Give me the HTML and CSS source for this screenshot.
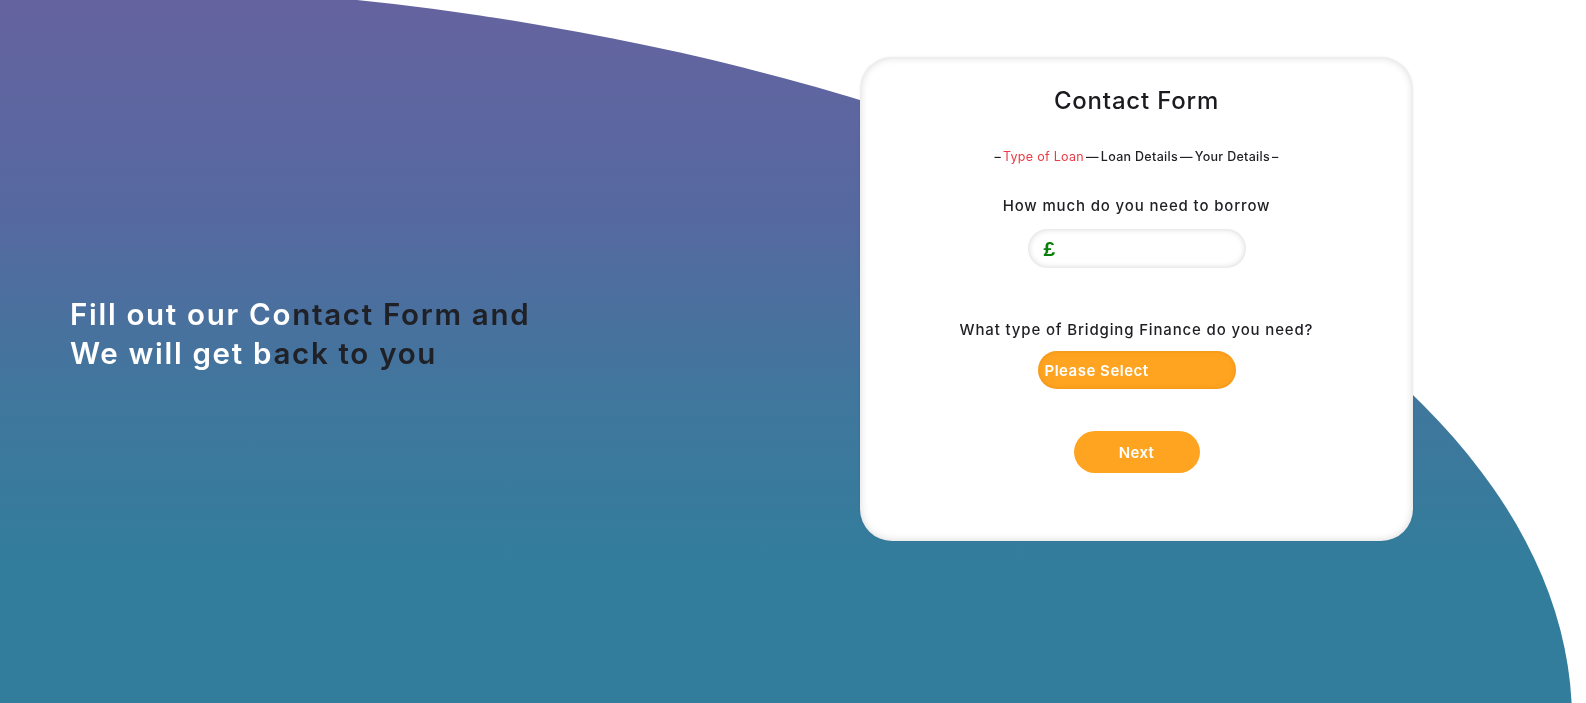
FILE: index.html
```html
<!DOCTYPE html>
<html lang="en">
<head>
  <meta charset="UTF-8" />
  <meta name="viewport" content="width=device-width, initial-scale=1.0"/>
  <title>Contact Form</title>
  <link rel="stylesheet" href="styles.css">
</head>
<body>
  <div class="page">
    <!-- Texto da esquerda -->
    <h2 class="hero">Fill out our Co<span class="escuro">ntact Form and</span><br>We will get b<span class="escuro">ack to you</span></h2>

    <!-- Formulario -->
    <form class="card" onsubmit="return false">
      <h1>Contact Form</h1>

      <div class="steps">
        <span class="dash">&ndash;</span>
        <span class="ativo">Type of Loan</span>
        <span class="dash">&mdash;</span>
        <span>Loan Details</span>
        <span class="dash">&mdash;</span>
        <span>Your Details</span>
        <span class="dash">&ndash;</span>
      </div>

      <label class="pergunta" for="valor">How much do you need to borrow</label>
      <div class="valor-box">
        <span class="libra">£</span>
        <input id="valor" type="text" />
      </div>

      <label class="pergunta segunda" for="tipo">What type of Bridging Finance do you need?</label>
      <div class="select-box" id="tipo">Please Select</div>

      <button class="next-btn" type="button">Next</button>
    </form>
  </div>
</body>
</html>
```

FILE: styles.css
```css
body {
  margin: 0;
  padding: 0;
  font-family: 'Inter', 'Open Sans', sans-serif;
  background: #fff;
  color: #1f1f24;
  overflow: hidden;
}

/* fundo em forma de elipse */
body::before {
  content: "";
  position: fixed;
  inset: 0;
  z-index: -1;
  background: linear-gradient(180deg, #65639f 0%, #5668a0 30%, #41769d 55%, #337d9c 80%, #337d9c 100%);
  clip-path: ellipse(1556px 738px at 16px 720px);
}

.page {
  height: 703px;
  display: flex;
  align-items: flex-start;
}

.hero {
  margin: 295px 0 0 70px;
  font-size: 29.5px;
  font-weight: 600;
  line-height: 39px;
  letter-spacing: 1.7px;
  width: 480px;
  color: #fff;
}

.hero .escuro {
  color: #202126;
}

.card {
  margin: 57px 173px 0 auto;
  width: 553px;
  height: 484px;
  box-sizing: border-box;
  padding-top: 29px;
  background: #fff;
  border-radius: 32px;
  box-shadow: inset 0 0 9px rgba(0, 0, 0, 0.16), 0 0 3px rgba(0, 0, 0, 0.06);
  display: flex;
  flex-direction: column;
  align-items: center;
}

h1 {
  margin: 0;
  font-size: 24px;
  font-weight: 500;
  line-height: 30px;
  letter-spacing: 0.8px;
  color: #1a1a1f;
}

.steps {
  margin-top: 32px;
  font-size: 12.5px;
  font-weight: 500;
  line-height: 18px;
  letter-spacing: 0.3px;
  display: flex;
  gap: 2px;
  color: #1f1f24;
}

.steps .ativo {
  color: #ec3b45;
  font-weight: 400;
}

.pergunta {
  margin-top: 29px;
  font-size: 15px;
  font-weight: 500;
  line-height: 22px;
  letter-spacing: 0.85px;
}

.pergunta.segunda {
  margin-top: 51px;
}

.valor-box {
  margin-top: 12px;
  width: 218px;
  height: 39px;
  box-sizing: border-box;
  border-radius: 20px;
  box-shadow: inset 0 0 6px rgba(0, 0, 0, 0.18);
  display: flex;
  align-items: center;
  padding-left: 16px;
}

.libra {
  color: #0b7d0b;
  font-size: 21px;
  font-weight: 700;
  font-family: 'Liberation Sans', sans-serif;
}

.valor-box input {
  border: none;
  outline: none;
  background: transparent;
  width: 150px;
  margin-left: 8px;
}

.select-box {
  margin-top: 10px;
  width: 198px;
  height: 38px;
  box-sizing: border-box;
  padding-left: 7px;
  border-radius: 19px;
  background: #ffa420;
  box-shadow: inset 0 0 5px rgba(200, 110, 0, 0.35);
  color: #fff;
  font-size: 15px;
  font-weight: 600;
  letter-spacing: 0.5px;
  display: flex;
  align-items: center;
}

.next-btn {
  margin-top: 42px;
  width: 126px;
  height: 42px;
  border: none;
  border-radius: 21px;
  background: #ffa420;
  color: #fff;
  font-family: inherit;
  font-size: 15px;
  font-weight: 600;
  letter-spacing: 0.4px;
  cursor: pointer;
}
```
